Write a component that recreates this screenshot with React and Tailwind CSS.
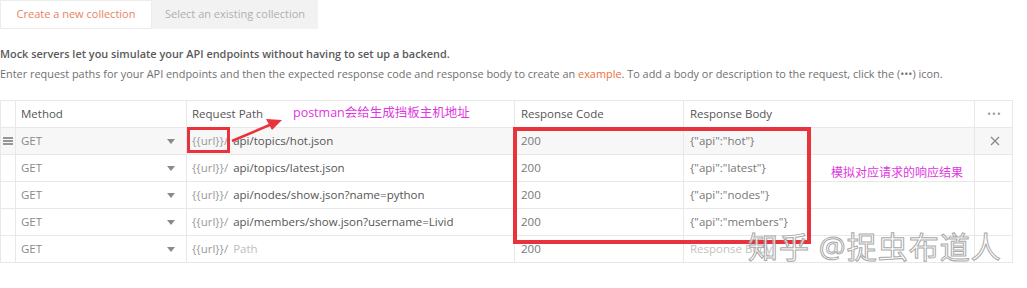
// Mock server "create a new collection" step, with red/magenta annotations on top.
import React from 'react';

const rows = [
  { path: 'api/topics/hot.json', body: '{"api":"hot"}', hover: true },
  { path: 'api/topics/latest.json', body: '{"api":"latest"}' },
  { path: 'api/nodes/show.json?name=python', body: '{"api":"nodes"}' },
  { path: 'api/members/show.json?username=Livid', body: '{"api":"members"}' },
  { path: '', body: '' },
];

const Caret = () => (
  <svg width="8" height="5" viewBox="0 0 8 5" className="shrink-0">
    <path d="M0 0h8L4 5z" fill="#8a8a8a" />
  </svg>
);

const Row = ({ row }) => (
  <div className={`grid grid-cols-[15px_171px_328px_169px_291px_39px] h-[27px] border-b border-[#e8e8e8] text-[11.5px] ${row.hover ? 'bg-[#f7f7f7]' : 'bg-white'}`}>
    <div className="flex items-center justify-center border-r border-[#e8e8e8]">
      {row.hover && (
        <svg width="10" height="8" viewBox="0 0 10 8">
          <path d="M0 1h10M0 4h10M0 7h10" stroke="#777" strokeWidth="1.3" />
        </svg>
      )}
    </div>
    <div className="flex items-center justify-between pl-[5px] pr-[11px] border-r border-[#e8e8e8] text-[#8a8a8a]">
      <span>GET</span>
      <Caret />
    </div>
    <div className="flex items-center pl-[5px] border-r border-[#e8e8e8] whitespace-nowrap">
      <span className="text-[#9a9a9a]">{'{{url}}/'}</span>
      {row.path ? (
        <span className="ml-[5px] text-[#555]">{row.path}</span>
      ) : (
        <span className="ml-[5px] text-[#bdbdbd]">Path</span>
      )}
    </div>
    <div className="flex items-center pl-[6px] border-r border-[#e8e8e8] text-[#777]">200</div>
    <div className="flex items-center pl-[6px] border-r border-[#e8e8e8] whitespace-nowrap">
      {row.body ? <span className="text-[#777]">{row.body}</span> : <span className="text-[#c2c2c2]">Response Body</span>}
    </div>
    <div className="flex items-center justify-center">
      {row.hover && (
        <svg width="10" height="10" viewBox="0 0 10 10">
          <path d="M1 1l8 8M9 1l-8 8" stroke="#888" strokeWidth="1.2" />
        </svg>
      )}
    </div>
  </div>
);

export default function App() {
  return (
    <div className="relative w-[1027px] h-[288px] bg-white overflow-hidden" style={{ fontFamily: '"Open Sans", "Noto Sans CJK SC", sans-serif' }}>
      {/* tabs */}
      <div className="flex h-[29px] text-[11px]">
        <div className="w-[152px] flex items-center justify-center border border-[#ececec] text-[#e8825f]">Create a new collection</div>
        <div className="w-[166px] flex items-center justify-center bg-[#f2f2f2] text-[#b0b0b0]">Select an existing collection</div>
      </div>

      <p className="mt-[16px] text-[10.9px] font-semibold text-[#5a5a5a] leading-[18px]">
        Mock servers let you simulate your API endpoints without having to set up a backend.
      </p>
      <p className="mt-[2px] text-[10.9px] text-[#707070] leading-[18px] whitespace-nowrap">
        Enter request paths for your API endpoints and then the expected response code and response body to create an{' '}
        <span className="text-[#ef6c3a]">example</span>. To add a body or description to the request, click the (•••) icon.
      </p>

      {/* table */}
      <div className="mt-[17px] w-[1013px] border-t border-l border-r border-[#e8e8e8]">
        <div className="grid grid-cols-[15px_171px_328px_169px_291px_39px] h-[27px] border-b border-[#e8e8e8] text-[11.5px] text-[#555]">
          <div className="border-r border-[#e8e8e8]" />
          <div className="flex items-center pl-[5px] border-r border-[#e8e8e8]">Method</div>
          <div className="flex items-center pl-[5px] border-r border-[#e8e8e8]">Request Path</div>
          <div className="flex items-center pl-[6px] border-r border-[#e8e8e8]">Response Code</div>
          <div className="flex items-center pl-[6px] border-r border-[#e8e8e8]">Response Body</div>
          <div className="flex items-center justify-center text-[#999] tracking-[1px] text-[10px]">•••</div>
        </div>
        {rows.map((r, i) => (
          <Row key={i} row={r} />
        ))}
      </div>

      {/* annotations */}
      <div className="absolute left-[187px] top-[127px] w-[43px] h-[26px] border-[3px] border-[#e8323c]" />
      <svg className="absolute left-[228px] top-[110px]" width="60" height="36" viewBox="0 0 60 36">
        <path d="M4 31L44 14" stroke="#e8323c" strokeWidth="2.5" />
        <path d="M54 10L38 9L44 20z" fill="#e8323c" />
      </svg>
      <div className="absolute left-[293px] top-[104px] text-[12.5px] text-[#e036e0] whitespace-nowrap">postman会给生成挡板主机地址</div>

      <div className="absolute left-[513px] top-[127px] w-[298px] h-[117px] border-4 border-[#e8323c]" />
      <div className="absolute left-[831px] top-[164px] text-[12px] text-[#e036e0] whitespace-nowrap">模拟对应请求的响应结果</div>

      <div
        className="absolute left-[748px] top-[229px] text-[30px] leading-[36px] text-white whitespace-nowrap tracking-[1px]"
        style={{ WebkitTextStroke: '1px #9a9a9a', opacity: 0.85 }}
      >
        知乎 @捉虫布道人
      </div>
    </div>
  );
}
